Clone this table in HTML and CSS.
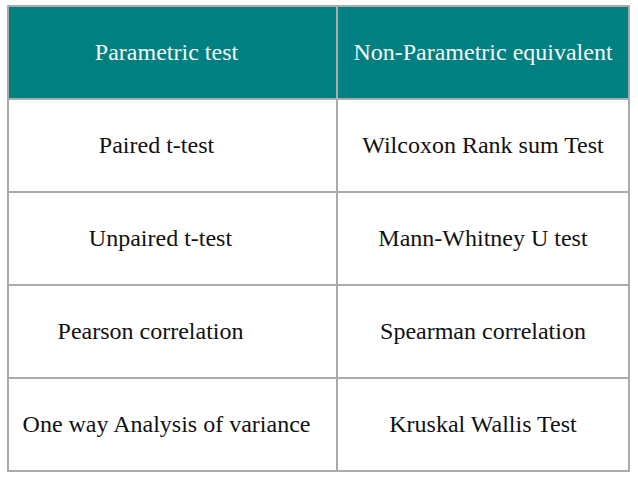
FILE: index.html
```html
<!DOCTYPE html>
<html>
<head>
<meta charset="utf-8">
<link rel="stylesheet" href="styles.css">
</head>
<body>
<table class="tests">
  <thead>
    <tr>
      <th class="c1 off-6">Parametric test</th>
      <th class="c2">Non-Parametric equivalent</th>
    </tr>
  </thead>
  <tbody>
    <tr>
      <td class="c1 off-16">Paired t-test</td>
      <td class="c2">Wilcoxon Rank sum Test</td>
    </tr>
    <tr>
      <td class="c1 off-12">Unpaired t-test</td>
      <td class="c2">Mann-Whitney U test</td>
    </tr>
    <tr>
      <td class="c1 off-22">Pearson correlation</td>
      <td class="c2">Spearman correlation</td>
    </tr>
    <tr>
      <td class="c1 off-6">One way Analysis of variance</td>
      <td class="c2">Kruskal Wallis Test</td>
    </tr>
  </tbody>
</table>
</body>
</html>
```
FILE: styles.css
```css
html, body {
  margin: 0;
  padding: 0;
  background: #ffffff;
}
body {
  padding: 5px 0 0 7px;
}
.tests {
  border-collapse: collapse;
  width: 623px;
  font-family: "Liberation Serif", "Times New Roman", serif;
  font-size: 24px;
  color: #111;
}
.tests th,
.tests td {
  border: 2px solid #ababab;
  height: 93px;
  padding: 0;
  text-align: center;
  vertical-align: middle;
  font-weight: normal;
  box-sizing: border-box;
}
.tests th {
  background: #008080;
  color: #f4f8f8;
}
.c1 { width: 329px; }
.c2 { width: 292px; }
.off-6 { padding-right: 12px !important; }
.off-12 { padding-right: 24px !important; }
.off-16 { padding-right: 32px !important; }
.off-22 { padding-right: 44px !important; }
```
